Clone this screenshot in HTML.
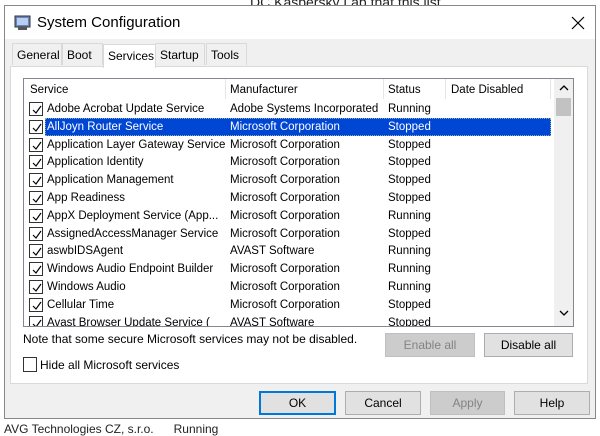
<!DOCTYPE html>
<html><head><style>
*{margin:0;padding:0;box-sizing:border-box}
body{width:600px;height:428px;position:relative;overflow:hidden;background:#fff;font-family:"Liberation Sans",sans-serif;font-size:12px;color:#000}
.a{position:absolute;white-space:nowrap}
.dlg{position:absolute;left:4px;top:5px;width:592px;height:414px;background:#f0f0f0;border:1px solid #888}
.title{position:absolute;left:0;top:0;width:590px;height:33px;background:#fff}
.tab{position:absolute;top:43px;height:22px;border:1px solid #d9d9d9;border-bottom:none;background:#f0f0f0;padding:4px 4px 0;font-size:12px}
.panel{position:absolute;left:10px;top:66px;width:578px;height:318px;background:#fff;border:1px solid #d9d9d9}
.list{position:absolute;left:23px;top:78px;width:551px;height:249px;border:1px solid #828790;background:#fff;overflow:hidden;font-size:11.5px}
.row{position:absolute;left:0;height:18px;width:527px}
.cb{position:absolute;left:5px;top:2px;width:14px;height:14px;border:1px solid #333;background:#fff}
.cb svg{position:absolute;left:1px;top:1px}
.btn{position:absolute;height:24px;border:1px solid #adadad;background:#e1e1e1;text-align:center;line-height:22px}
.dis{color:#838383;background:#cccccc;border-color:#bfbfbf}
</style></head><body>
<div class="a" style="left:250px;top:-6px;color:#222;font-size:14px">DC Kaspersky Lab that this list</div>
<div class="dlg">
<div class="title"></div>
<svg class="a" style="left:9px;top:9px" width="18" height="16"><rect x="1" y="1" width="15" height="11" fill="#6a84c0" stroke="#333"/><rect x="3" y="3" width="11" height="7" fill="#b9cff0"/><rect x="4" y="12" width="9" height="3" fill="#555"/></svg>
<div class="a" style="left:32px;top:8px;font-size:15px">System Configuration</div>
<svg class="a" style="left:566px;top:10px" width="14" height="14"><path d="M1 1L13 13M13 1L1 13" stroke="#000" stroke-width="1.2"/></svg>
</div>
<div class="tab" style="left:12px;width:50px">General</div>
<div class="tab" style="left:62px;width:41px">Boot</div>
<div class="tab" style="left:155px;width:50px">Startup</div>
<div class="tab" style="left:206px;width:41px">Tools</div>
<div class="panel"></div>
<div class="tab" style="left:103px;top:44px;width:53px;height:24px;background:#fff;padding-top:4px;z-index:2">Services</div>
<div class="list">
<div class="a" style="left:6px;top:5px">Service</div>
<div class="a" style="left:206px;top:5px">Manufacturer</div>
<div class="a" style="left:364px;top:5px">Status</div>
<div class="a" style="left:427px;top:5px">Date Disabled</div>
<div class="a" style="left:201px;top:0;width:1px;height:20px;background:#e5e5e5"></div>
<div class="a" style="left:359px;top:0;width:1px;height:20px;background:#e5e5e5"></div>
<div class="a" style="left:421px;top:0;width:1px;height:20px;background:#e5e5e5"></div>
<div class="a" style="left:526px;top:0;width:1px;height:20px;background:#e5e5e5"></div>
<div class="a" style="left:530px;top:0;width:19px;height:247px;background:#f0f0f0"></div>
<div class="a" style="left:532px;top:19px;width:15px;height:18px;background:#c2c2c2"></div>
<svg class="a" style="left:535px;top:6px" width="10" height="6"><path d="M1 5L5 1L9 5" stroke="#000" fill="none" stroke-width="1.3"/></svg>
<svg class="a" style="left:535px;top:231px" width="10" height="6"><path d="M1 1L5 5L9 1" stroke="#000" fill="none" stroke-width="1.3"/></svg>
<div id="rows"></div>
</div>
<div class="a" style="left:23px;top:332px">Note that some secure Microsoft services may not be disabled.</div>
<div class="btn dis" style="left:385px;top:333px;width:90px">Enable all</div>
<div class="btn" style="left:484px;top:333px;width:89px">Disable all</div>
<div class="a" style="left:23px;top:357px;width:14px;height:15px;border:1px solid #333;background:#fff"></div>
<div class="a" style="left:40px;top:358px">Hide all Microsoft services</div>
<div class="btn" style="left:259px;top:391px;width:77px;border:2px solid #0078d7;line-height:20px">OK</div>
<div class="btn" style="left:345px;top:391px;width:76px">Cancel</div>
<div class="btn dis" style="left:430px;top:391px;width:75px">Apply</div>
<div class="btn" style="left:514px;top:391px;width:76px">Help</div>
<div class="a" style="left:4px;top:422px;color:#222;font-size:12px">AVG Technologies CZ, s.r.o.&nbsp;&nbsp;&nbsp;&nbsp;&nbsp;&nbsp;Running</div>
<script>
var d=[["Adobe Acrobat Update Service","Adobe Systems Incorporated","Running"],["AllJoyn Router Service","Microsoft Corporation","Stopped"],["Application Layer Gateway Service","Microsoft Corporation","Stopped"],["Application Identity","Microsoft Corporation","Stopped"],["Application Management","Microsoft Corporation","Stopped"],["App Readiness","Microsoft Corporation","Stopped"],["AppX Deployment Service (App...","Microsoft Corporation","Running"],["AssignedAccessManager Service","Microsoft Corporation","Stopped"],["aswbIDSAgent","AVAST Software","Running"],["Windows Audio Endpoint Builder","Microsoft Corporation","Running"],["Windows Audio","Microsoft Corporation","Running"],["Cellular Time","Microsoft Corporation","Stopped"],["Avast Browser Update Service (","AVAST Software","Stopped"]];
var h="";
d.forEach(function(r,i){var t=21+i*17.8;var sel=i==1;
h+='<div class="row" style="top:'+t+'px"><div class="cb"><svg width="12" height="12"><path d="M2 6L5 9L10 2" stroke="#000" fill="none" stroke-width="1.2"/></svg></div>'+
(sel?'<div class="a" style="left:21px;top:0;width:506px;height:18px;background:#0046d4;border:1px dotted #8aa"></div>':'')+
'<div class="a" style="left:23px;top:3px;'+(sel?'color:#fff':'')+'">'+r[0]+'</div><div class="a" style="left:206px;top:3px;'+(sel?'color:#fff':'')+'">'+r[1]+'</div><div class="a" style="left:364px;top:3px;'+(sel?'color:#fff':'')+'">'+r[2]+'</div></div>';});
document.getElementById("rows").innerHTML=h;
</script>
</body></html>
